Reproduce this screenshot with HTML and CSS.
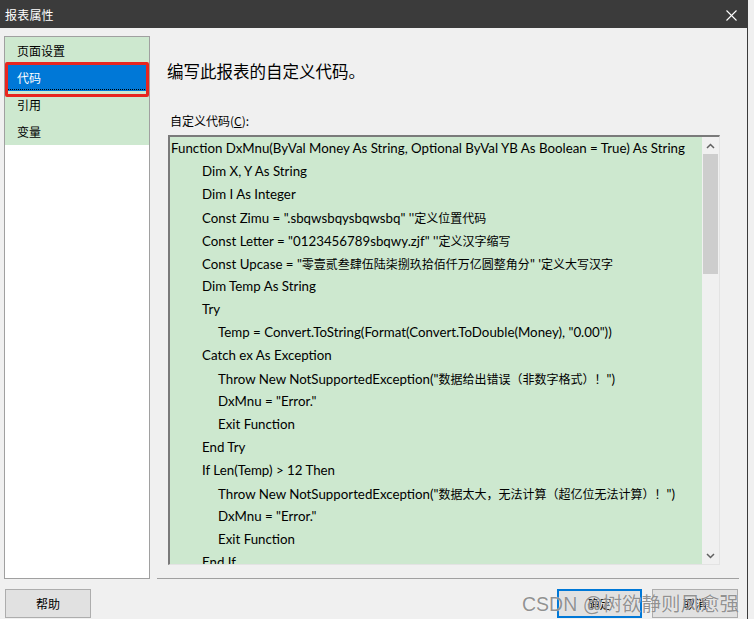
FILE: index.html
```html
<!DOCTYPE html>
<html lang="zh-CN">
    <head>
        <meta charset="UTF-8" />
        <title>报表属性</title>
        <link rel="stylesheet" href="styles.css">
    </head>
    <body>
        <div class="window">
            <!-- Title bar -->
            <div class="titlebar">
                <span class="title">报表属性</span>
                <svg class="close-icon" width="11" height="11" viewBox="0 0 11 11" fill="none" stroke="#ffffff" stroke-width="1.1">
                    <path d="M0.5 0.5 10.5 10.5"></path>
                    <path d="M10.5 0.5 0.5 10.5"></path>
                </svg>
            </div>

            <div class="dialog-body">
                <!-- Left navigation -->
                <div class="sidebar">
                    <ul class="nav">
                        <li class="nav-item">页面设置</li>
                        <li class="nav-item active">代码</li>
                        <li class="nav-item">引用</li>
                        <li class="nav-item">变量</li>
                    </ul>
                    <div class="mark-box"></div>
                </div>

                <!-- Page content -->
                <div class="content">
                    <h1 class="heading">编写此报表的自定义代码。</h1>
                    <div class="field-label">自定义代码(<u>C</u>):</div>

                    <div class="code-box">
                        <div class="code">
                            <div class="line">Function DxMnu(ByVal Money As String, Optional ByVal YB As Boolean = True) As String</div>
                            <div class="line i1">Dim X, Y As String</div>
                            <div class="line i1">Dim I As Integer</div>
                            <div class="line i1">Const Zimu = ".sbqwsbqysbqwsbq" ''<span class="zh">定义位置代码</span></div>
                            <div class="line i1">Const Letter = "0123456789sbqwy.zjf" ''<span class="zh">定义汉字缩写</span></div>
                            <div class="line i1">Const Upcase = "<span class="zh">零壹贰叁肆伍陆柒捌玖拾佰仟万亿圆整角分</span>" '<span class="zh">定义大写汉字</span></div>
                            <div class="line i1">Dim Temp As String</div>
                            <div class="line i1">Try</div>
                            <div class="line i2">Temp = Convert.ToString(Format(Convert.ToDouble(Money), "0.00"))</div>
                            <div class="line i1">Catch ex As Exception</div>
                            <div class="line i2">Throw New NotSupportedException("<span class="zh">数据给出错误（非数字格式）！</span>")</div>
                            <div class="line i2">DxMnu = "Error."</div>
                            <div class="line i2">Exit Function</div>
                            <div class="line i1">End Try</div>
                            <div class="line i1">If Len(Temp) &gt; 12 Then</div>
                            <div class="line i2">Throw New NotSupportedException("<span class="zh">数据太大，无法计算（超亿位无法计算）！</span>")</div>
                            <div class="line i2">DxMnu = "Error."</div>
                            <div class="line i2">Exit Function</div>
                            <div class="line i1">End If</div>
                        </div>

                        <!-- Vertical scrollbar -->
                        <div class="scrollbar">
                            <div class="scroll-arrow">
                                <svg width="9" height="6" viewBox="0 0 9 6" fill="none" stroke="#606060" stroke-width="1.5">
                                    <path d="M1 5 4.5 1.5 8 5"></path>
                                </svg>
                            </div>
                            <div class="scroll-track">
                                <div class="scroll-thumb"></div>
                            </div>
                            <div class="scroll-arrow">
                                <svg width="9" height="6" viewBox="0 0 9 6" fill="none" stroke="#606060" stroke-width="1.5">
                                    <path d="M1 1 4.5 4.5 8 1"></path>
                                </svg>
                            </div>
                        </div>
                    </div>
                </div>
            </div>

            <!-- Buttons -->
            <div class="footer">
                <button class="btn btn-help">帮助</button>
                <div class="footer-right">
                    <button class="btn btn-default">确定</button>
                    <button class="btn">取消</button>
                </div>
                <div class="watermark">CSDN @树欲静则风愈强</div>
            </div>
        </div>
    </body>
</html>
```

FILE: styles.css
```css
* {
    margin: 0;
    padding: 0;
    box-sizing: border-box;
}

body {
    background-color: #f0f0f0;
    font-family: "Lato", "Noto Sans CJK SC", sans-serif;
    font-size: 12px;
    color: #000;
}

.window {
    position: relative;
    width: 748px;
    height: 619px;
    background-color: #f0f0f0;
    border-right: 1px solid #3b3b3b;
    overflow: hidden;
}

/* Title bar */
.titlebar {
    height: 28px;
    background-color: #3b3b3b;
    color: #fff;
    display: flex;
    justify-content: space-between;
    align-items: center;
    padding: 0 10px 0 5px;
}

.title {
    font-family: "Noto Sans CJK SC", sans-serif;
    font-size: 12px;
    letter-spacing: 0.2px;
}

.close-icon {
    margin-top: 2px;
}

/* Main area */
.dialog-body {
    display: flex;
    padding: 8px 8px 0 4px;
}

.sidebar {
    position: relative;
    width: 146px;
    height: 543px;
    background-color: #fff;
    border: 1px solid #a0a0a0;
}

.nav {
    list-style: none;
    background-color: #cde8cf;
}

.nav-item {
    position: relative;
    height: 27px;
    line-height: 27px;
    padding-left: 12px;
    font-family: "Noto Sans CJK SC", sans-serif;
    font-size: 12px;
}

.nav-item.active {
    background-color: #0078d7;
    color: #fff;
}

.nav-item.active::after {
    content: "";
    position: absolute;
    inset: 0 0 1px 0;
    border: 1px dotted #000;
}

/* red annotation box round the selected item */
.mark-box {
    position: absolute;
    left: 0;
    top: 25px;
    width: 144px;
    height: 35px;
    border: 3px solid #e8261f;
    border-radius: 2px;
}

.content {
    flex: 1;
    margin-left: 7px;
    height: 543px;
    border-bottom: 1px solid #a0a0a0;
}

.heading {
    margin-top: 25px;
    padding-left: 10px;
    font-family: "Noto Sans CJK SC", sans-serif;
    font-size: 16.5px;
    font-weight: 400;
    line-height: 20px;
}

.field-label {
    margin-top: 32px;
    padding-left: 13px;
    font-family: "Noto Sans CJK SC", sans-serif;
    font-size: 12px;
    line-height: 16px;
}

/* Code editor */
.code-box {
    display: flex;
    margin: 6px 0 0 11px;
    width: 552px;
    height: 430px;
    border-top: 2px solid #7a7a7a;
    border-left: 2px solid #7a7a7a;
    border-right: 1px solid #e3e3e3;
    border-bottom: 1px solid #e3e3e3;
}

.code {
    flex: 1;
    background-color: #cde8cf;
    padding-left: 1px;
    overflow: hidden;
    white-space: nowrap;
    font-family: "Lato", sans-serif;
    font-size: 13.3px;
}

.line {
    height: 23px;
    line-height: 23px;
}

.line.i1 {
    padding-left: 31px;
}

.line.i2 {
    padding-left: 47px;
}

.zh {
    font-family: "Noto Sans CJK SC", sans-serif;
    font-size: 12px;
}

.scrollbar {
    width: 17px;
    display: flex;
    flex-direction: column;
    background-color: #f0f0f0;
}

.scroll-arrow {
    height: 17px;
    display: flex;
    align-items: center;
    justify-content: center;
}

.scroll-track {
    flex: 1;
}

.scroll-thumb {
    margin: 0 1px;
    height: 120px;
    background-color: #cdcdcd;
}

/* Footer buttons */
.footer {
    position: relative;
    display: flex;
    justify-content: space-between;
    padding: 10px 9px 0 5px;
}

.footer-right {
    display: flex;
    gap: 10px;
}

.btn {
    height: 29px;
    width: 86px;
    background-color: #e1e1e1;
    border: 1px solid #adadad;
    font-family: "Noto Sans CJK SC", sans-serif;
    font-size: 12px;
    color: #000;
}

.btn-default {
    width: 85px;
    border: 2px solid #0078d7;
}

.watermark {
    position: absolute;
    right: 8px;
    top: 9px;
    font-family: "Liberation Sans", "Noto Sans CJK SC", sans-serif;
    font-size: 19.5px;
    color: rgba(110, 110, 110, 0.75);
    text-shadow: 0 0 1px #fff;
    pointer-events: none;
}
```
